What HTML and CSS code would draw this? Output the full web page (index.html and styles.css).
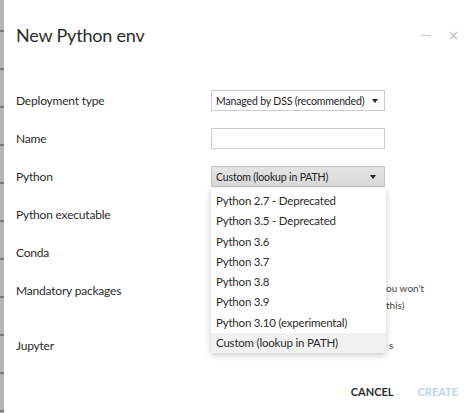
FILE: index.html
```html
<!DOCTYPE html>
<html lang="en">
<head>
    <meta charset="UTF-8">
    <meta name="viewport" content="width=device-width, initial-scale=1.0">
    <title>New Python env</title>
    <link rel="stylesheet" href="styles.css">
</head>
<body>
    <div class="page">
        <div class="backdrop"></div>
        <div class="modal">
            <div class="modal-header">
                <h1 class="modal-title">New Python env</h1>
                <div class="header-icons">
                    <svg class="icon" width="10" height="10" viewBox="0 0 10 10"><path d="M0 5.5h10" stroke="#d0d0d0" stroke-width="1.4"/></svg>
                    <svg class="icon" width="9" height="9" viewBox="0 0 9 9"><path d="M1 1l7 7M8 1l-7 7" stroke="#c8c8c8" stroke-width="1.6"/></svg>
                </div>
            </div>

            <div class="modal-body">
                <div class="row">
                    <label class="row-label">Deployment type</label>
                    <div class="field">
                        <div class="select">
                            <span>Managed by DSS (recommended)</span>
                            <span class="caret"></span>
                        </div>
                    </div>
                </div>
                <div class="row">
                    <label class="row-label">Name</label>
                    <div class="field">
                        <div class="text-input"></div>
                    </div>
                </div>
                <div class="row">
                    <label class="row-label">Python</label>
                    <div class="field">
                        <div class="select-wrap">
                            <div class="select open">
                                <span>Custom (lookup in PATH)</span>
                                <span class="caret"></span>
                            </div>
                            <ul class="dropdown">
                                <li>Python 2.7 - Deprecated</li>
                                <li>Python 3.5 - Deprecated</li>
                                <li>Python 3.6</li>
                                <li>Python 3.7</li>
                                <li>Python 3.8</li>
                                <li>Python 3.9</li>
                                <li>Python 3.10 (experimental)</li>
                                <li class="active">Custom (lookup in PATH)</li>
                            </ul>
                        </div>
                    </div>
                </div>
                <div class="row">
                    <label class="row-label">Python executable</label>
                    <div class="field"></div>
                </div>
                <div class="row">
                    <label class="row-label">Conda</label>
                    <div class="field"></div>
                </div>
                <div class="row tall">
                    <label class="row-label">Mandatory packages</label>
                    <!-- only the tail of the help text shows past the open dropdown -->
                    <div class="field help">
                        <div class="help-line">ou won't</div>
                        <div class="help-line">this)</div>
                    </div>
                </div>
                <div class="row">
                    <label class="row-label">Jupyter</label>
                    <div class="field help">
                        <div class="help-line jupyter-tail">s</div>
                    </div>
                </div>
            </div>

            <div class="modal-footer">
                <button class="btn">CANCEL</button>
                <button class="btn disabled">CREATE</button>
            </div>
        </div>
    </div>
</body>
</html>
```

FILE: styles.css
```css
body {
    margin: 0;
    font-family: Lato, "Noto Sans", sans-serif;
    color: #2b2b2b;
    background: #fff;
}

.page {
    display: flex;
    height: 413px;
    overflow: hidden;
}

.backdrop {
    width: 4px;
    flex-shrink: 0;
    background-color: #b4b4b4;
    background-image: repeating-linear-gradient(180deg, transparent 0, transparent 30px, #777 30px, #777 32px, transparent 32px, transparent 38px);
}

.modal {
    flex: 1;
    display: flex;
    flex-direction: column;
}

.modal-header {
    height: 70px;
    display: flex;
    align-items: center;
    justify-content: space-between;
    padding: 0 16px 0 12px;
}

.modal-title {
    margin: 0;
    font-size: 18px;
    letter-spacing: -0.2px;
    font-weight: normal;
    color: #2b2b2b;
}

.header-icons {
    display: flex;
    align-items: center;
    gap: 18px;
}

.icon {
    display: block;
}

.modal-body {
    padding: 20px 0 0 12px;
}

.row {
    display: flex;
    align-items: flex-start;
    height: 21px;
    margin-bottom: 17px;
}

.row.tall {
    height: 34px;
    margin-bottom: 21px;
}

.row-label {
    width: 195px;
    line-height: 21px;
    font-size: 12px;
    letter-spacing: -0.2px;
}

.field {
    width: 174px;
}

.select, .text-input {
    box-sizing: border-box;
    height: 21px;
    border: 1px solid #ccc;
    background: #fff;
}

.select {
    display: flex;
    align-items: center;
    justify-content: space-between;
    padding: 0 6px 0 4px;
    font-size: 10.5px;
    letter-spacing: -0.15px;
    white-space: nowrap;
    color: #222;
}

.select.open {
    background: linear-gradient(#e4e4e4, #d8d8d8);
    border-color: #c4c4c4;
    padding-right: 8px;
}

.caret {
    width: 0;
    height: 0;
    border-left: 3px solid transparent;
    border-right: 3px solid transparent;
    border-top: 4px solid #222;
}

.select-wrap {
    position: relative;
}

.dropdown {
    position: absolute;
    top: 22px;
    left: 0;
    width: 175px;
    margin: 0;
    padding: 3px 0 0;
    list-style-type: none;
    background: #fff;
    box-shadow: 0 2px 6px rgba(0, 0, 0, 0.22);
    z-index: 2;
}

.dropdown li {
    height: 20.3px;
    line-height: 20.3px;
    padding-left: 5px;
    font-size: 11.5px;
    letter-spacing: -0.2px;
    color: #2b2b2b;
}

.dropdown li.active {
    background-color: #f1f1f1;
}

.help {
    padding-left: 175px;
    width: 60px;
}

.help-line {
    line-height: 17px;
    font-size: 10px;
    color: #444;
    white-space: nowrap;
}

.jupyter-tail {
    line-height: 21px;
    padding-left: 3px;
}

.modal-footer {
    margin-top: auto;
    display: flex;
    justify-content: flex-end;
    gap: 8px;
    padding: 0 8px 7px 0;
}

.btn {
    height: 30px;
    padding: 0 8px;
    border: none;
    background: none;
    font-family: Lato, "Noto Sans", sans-serif;
    font-size: 11px;
    font-weight: bold;
    color: #2b2b2b;
    cursor: pointer;
}

.btn.disabled {
    color: #bcd3ec;
}
```
